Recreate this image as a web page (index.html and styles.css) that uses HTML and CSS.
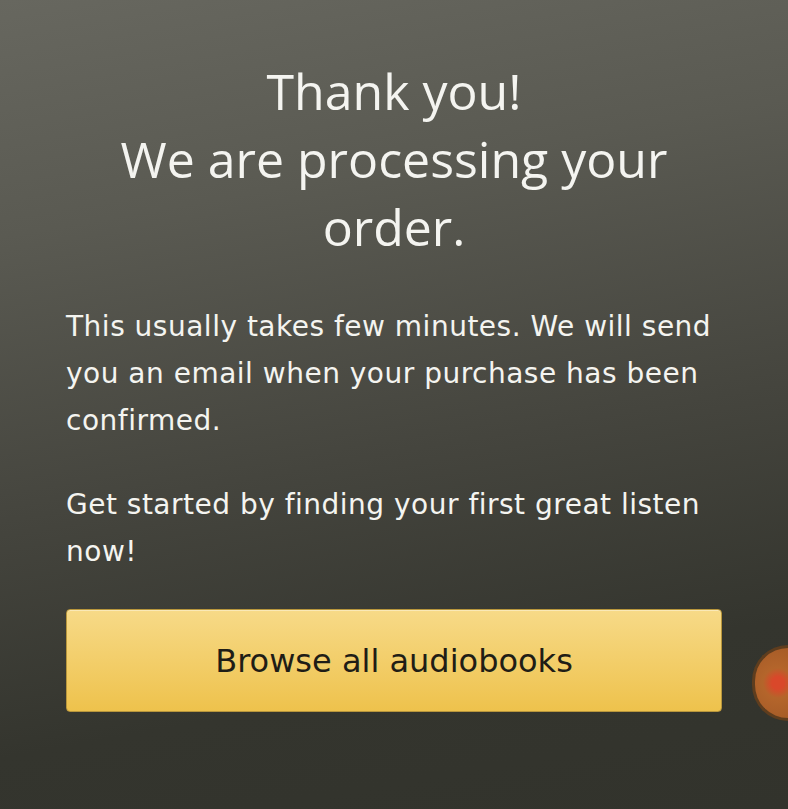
FILE: index.html
```html
<!DOCTYPE html>
<html lang="en">
<head>
    <meta charset="UTF-8">
    <meta name="viewport" content="width=device-width, initial-scale=1.0">
    <title>Thank you</title>
    <link rel="stylesheet" href="styles.css">
</head>
<body>
    <div class="order-page">
        <h1 class="order-title">Thank you!<br>We are processing your<br>order.</h1>

        <p class="order-text">This usually takes few minutes. We will send you an email when your purchase has been confirmed.</p>
        <p class="order-text">Get started by finding your first great listen now!</p>

        <button class="browse-btn">Browse all audiobooks</button>
    </div>

    <div class="chat-bubble"></div>
</body>
</html>
```

FILE: styles.css
```css
:root {
    --text-light: #f4f4f0;
    --btn-top: #f7da88;
    --btn-bottom: #eec24c;
    --btn-border: #b8963c;
}

html, body {
    height: 100%;
}

body {
    margin: 0;
    overflow: hidden;
    position: relative;
    font-family: 'DejaVu Sans', 'Open Sans', sans-serif;
    color: var(--text-light);
    background: linear-gradient(170deg, #67675f 0%, #5a5a52 25%, #45453e 55%, #34352e 80%, #32332c 100%);
}

.order-page {
    padding: 57px 66px 0 66px;
}

.order-title {
    margin: 0 0 42px;
    font-family: 'Open Sans', sans-serif;
    font-size: 50px;
    font-weight: 400;
    line-height: 68px;
    text-align: center;
}

.order-text {
    margin: 0;
    font-size: 28px;
    line-height: 47px;
    letter-spacing: 0.5px;
}

.order-text + .order-text {
    margin-top: 37px;
}

.browse-btn {
    display: block;
    width: 100%;
    height: 103px;
    margin-top: 34px;
    padding: 0;
    border: 1px solid var(--btn-border);
    border-radius: 4px;
    background: linear-gradient(to bottom, var(--btn-top), var(--btn-bottom));
    box-shadow: inset 0 1px 0 rgba(255, 255, 255, 0.4);
    color: #1f1d16;
    font-family: inherit;
    font-size: 32px;
    cursor: pointer;
}

/* floating help button, docked half off the right edge */
.chat-bubble {
    position: absolute;
    top: 645px;
    right: 0;
    width: 36px;
    height: 76px;
    box-sizing: border-box;
    border-radius: 38px 0 0 38px;
    border: 3px solid #5e3d1e;
    border-right: none;
    background: radial-gradient(circle at 23px 50%, #d9482a 0 6px, #b4652b 15px, #a35a27 100%);
}
```
